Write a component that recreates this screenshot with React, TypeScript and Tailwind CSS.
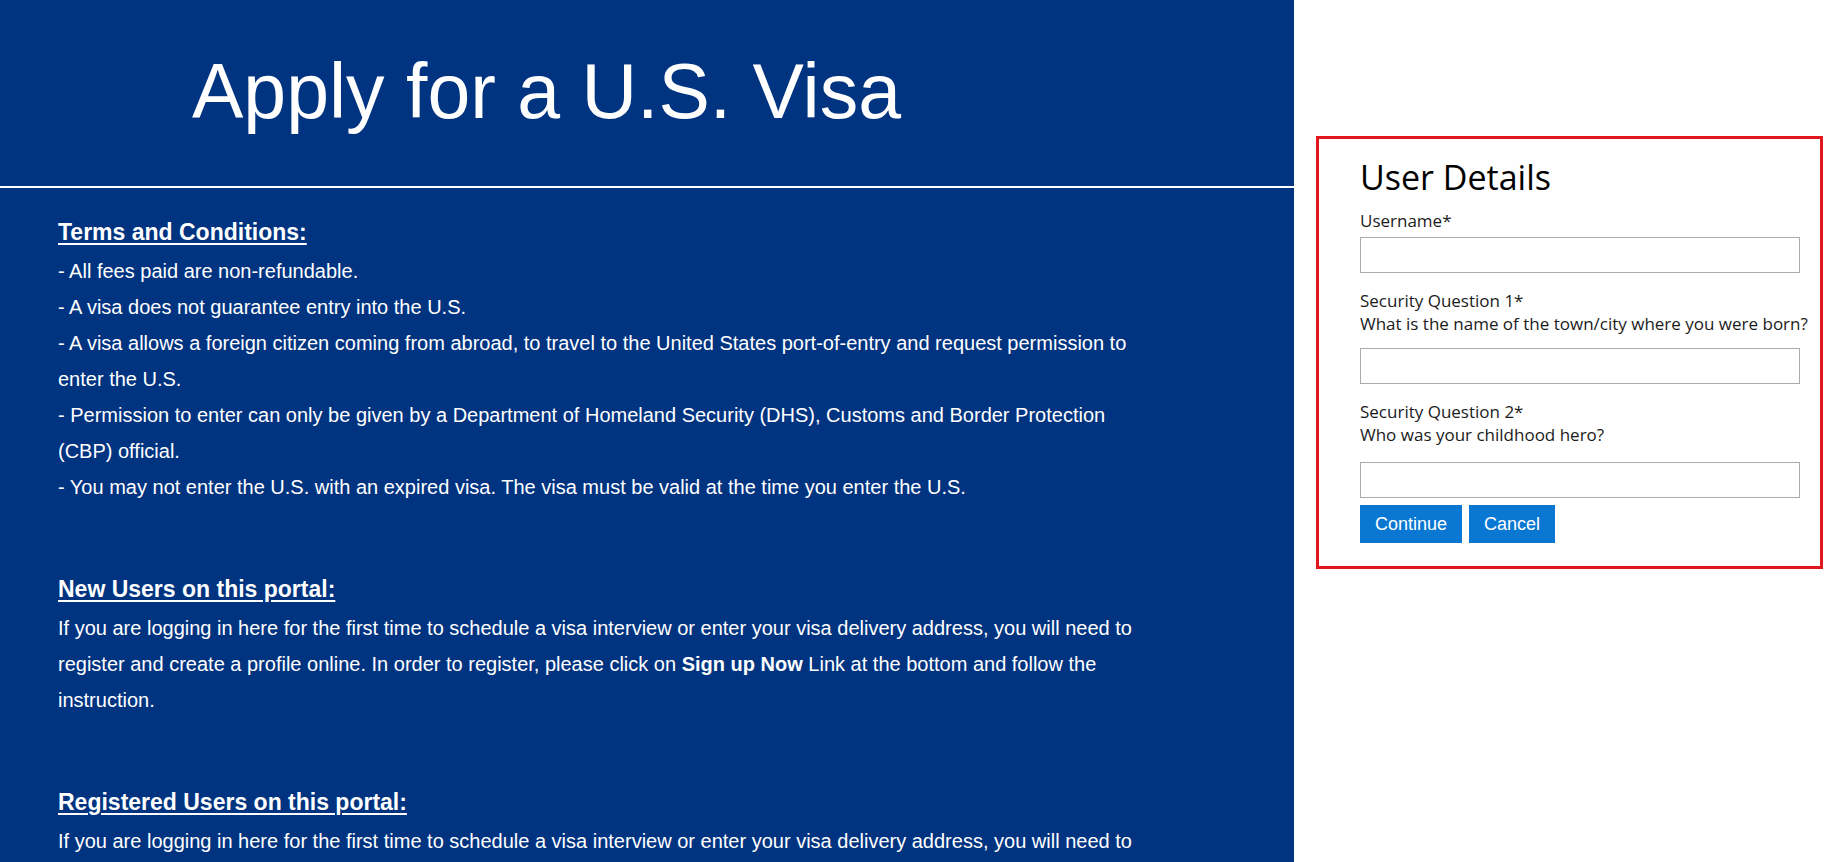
import React from 'react';

const sections = [
  {
    title: 'Terms and Conditions:',
    body: (
      <>
        <p>- All fees paid are non-refundable.</p>
        <p>- A visa does not guarantee entry into the U.S.</p>
        <p>
          - A visa allows a foreign citizen coming from abroad, to travel to the United States port-of-entry and request
          permission to enter the U.S.
        </p>
        <p>
          - Permission to enter can only be given by a Department of Homeland Security (DHS), Customs and Border
          Protection (CBP) official.
        </p>
        <p>- You may not enter the U.S. with an expired visa. The visa must be valid at the time you enter the U.S.</p>
      </>
    ),
  },
  {
    title: 'New Users on this portal:',
    body: (
      <p>
        If you are logging in here for the first time to schedule a visa interview or enter your visa delivery address,
        you will need to register and create a profile online. In order to register, please click on{' '}
        <span className="font-bold">Sign up Now</span> Link at the bottom and follow the instruction.
      </p>
    ),
  },
  {
    title: 'Registered Users on this portal:',
    body: (
      <p>
        If you are logging in here for the first time to schedule a visa interview or enter your visa delivery address,
        you will need to use the username and password you created earlier. Please contact us if you have forgotten
        your login details.
      </p>
    ),
  },
];

const Field = ({ label, question, gap }: { label: string; question?: string; gap: string }) => (
  <div>
    <div className="text-[17px] leading-[23px] text-[#1b1b1b]">
      <div>{label}</div>
      {question && <div>{question}</div>}
    </div>
    <input
      type="text"
      className={`${gap} block w-[440px] h-[36px] border border-[#ababab] bg-white px-2 text-[16px] outline-none`}
    />
  </div>
);

export default function App() {
  return (
    <div className="flex h-screen w-full overflow-hidden bg-white">
      {/* left info panel */}
      <div className="w-[1294px] shrink-0 bg-[#003380] text-white font-['Liberation_Sans',Arial,sans-serif]">
        <div className="h-[188px] border-b-2 border-white pt-[53px] pl-[192px]">
          <h1 className="text-[77px] leading-none font-normal">Apply for a U.S. Visa</h1>
        </div>

        <div className="pl-[58px] pt-[26px] w-[1148px] flex flex-col gap-[66px]">
          {sections.map((s) => (
            <div key={s.title}>
              <h2 className="text-[23px] leading-[36px] font-bold underline underline-offset-[3px] mb-[3px]">
                {s.title}
              </h2>
              <div className="text-[20px] leading-[36px]">{s.body}</div>
            </div>
          ))}
        </div>
      </div>

      {/* right form panel */}
      <div className="flex-1 font-['Open_Sans',sans-serif]">
        <div className="mt-[136px] ml-[22px] w-[507px] border-[3px] border-[#e3171b] pt-[18px] pl-[41px] pb-[23px]">
          <h2 className="text-[34px] leading-[40px] text-black">User Details</h2>

          <div className="mt-[12px]">
            <Field label="Username*" gap="mt-[5px]" />
          </div>
          <div className="mt-[16px]">
            <Field
              label="Security Question 1*"
              question="What is the name of the town/city where you were born?"
              gap="mt-[13px]"
            />
          </div>
          <div className="mt-[16px]">
            <Field label="Security Question 2*" question="Who was your childhood hero?" gap="mt-[16px]" />
          </div>

          <div className="mt-[7px] flex gap-[7px] font-['Liberation_Sans',Arial,sans-serif]">
            <button className="h-[38px] px-[15px] bg-[#0a78d2] text-white text-[18px]">Continue</button>
            <button className="h-[38px] px-[15px] bg-[#0a78d2] text-white text-[18px]">Cancel</button>
          </div>
        </div>
      </div>
    </div>
  );
}
